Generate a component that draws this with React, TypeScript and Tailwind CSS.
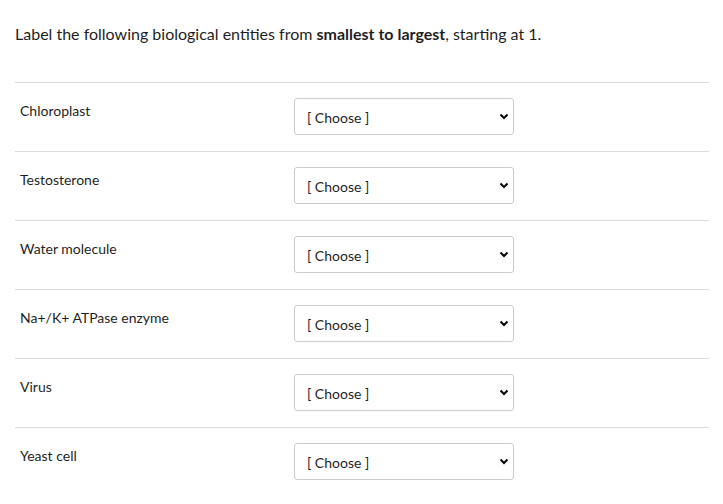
import React from "react";

const items = [
  "Chloroplast",
  "Testosterone",
  "Water molecule",
  "Na+/K+ ATPase enzyme",
  "Virus",
  "Yeast cell",
];

export default function App() {
  return (
    <div
      className="w-[723px] h-[504px] overflow-hidden bg-white text-[#1f1f1f] relative"
      style={{ fontFamily: "Lato, 'Noto Sans', sans-serif" }}
    >
      <div className="pl-[15px] pr-[14px]">
        <p className="pt-[23px] text-[16px] leading-[22px]">
          Label the following biological entities from <strong className="font-bold">smallest to largest</strong>, starting at 1.
        </p>
        <div className="mt-[37px]">
          {items.map((it) => (
            <div key={it} className="border-t border-[#dcdcdc] flex pt-[15px] pb-[16px]">
              <div className="w-[279px] pl-[5px] pt-[4px] text-[14px] leading-[18px]">{it}</div>
              <div className="relative w-[220px] h-[37px]">
                <select
                  className="appearance-none w-full h-full border border-[#c7cdd1] rounded-[3px] bg-white pl-[12px] pr-[20px] pt-[1px] text-[14px] text-[#1f1f1f]"
                  defaultValue=""
                >
                  <option value="">[ Choose ]</option>
                </select>
                <svg
                  className="absolute right-[5px] top-[15px] pointer-events-none"
                  width="10"
                  height="7"
                  viewBox="0 0 10 7"
                >
                  <path d="M1.5 1.5 L5 5 L8.5 1.5" fill="none" stroke="#000" strokeWidth="2" />
                </svg>
              </div>
            </div>
          ))}
        </div>
      </div>
    </div>
  );
}
